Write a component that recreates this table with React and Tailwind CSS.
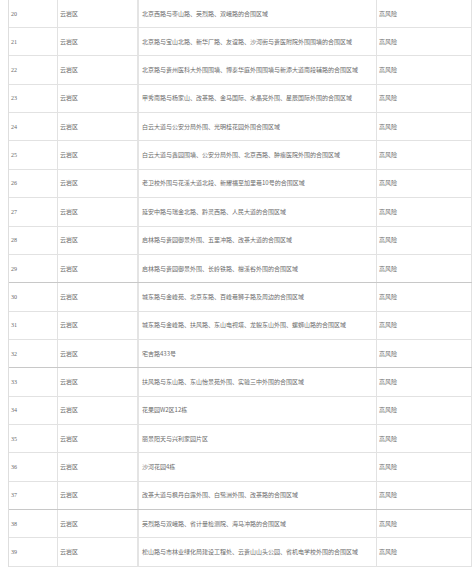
import React from "react";

const rows = [
  ["20", "北京西路与枣山路、英烈路、双峨路的合围区域"],
  ["21", "北京路与宝山北路、新华厂路、友谊路、沙河街与贵医附院外围围墙的合围区域"],
  ["22", "北京路与贵州医科大外围围墙、博泰华庭外围围墙与新添大道南段辅路的合围区域"],
  ["23", "甲秀南路与杨家山、改茶路、金马国际、水晶亮外围、星辰国际外围的合围区域"],
  ["24", "白云大道与公安分局外围、光明桂花园外围合围区域"],
  ["25", "白云大道与鑫园围墙、公安分局外围、北京西路、肿瘤医院外围的合围区域"],
  ["26", "老卫校外围与花溪大道北段、新耀福至加里巷10号的合围区域"],
  ["27", "延安中路与瑞金北路、黔灵西路、人民大道的合围区域"],
  ["28", "启林路与贵园御景外围、五里冲路、改茶大道的合围区域"],
  ["29", "启林路与贵园御景外围、长岭铁路、檀溪谷外围的合围区域"],
  ["30", "城东路与金峰苑、北京东路、百峰巷狮子路及周边的合围区域"],
  ["31", "城东路与金峰路、扶风路、东山电视塔、龙鲵东山外围、螺蛳山路的合围区域"],
  ["32", "宅吉路433号"],
  ["33", "扶风路与东山路、东山怡景苑外围、实验三中外围的合围区域"],
  ["34", "花果园W2区12栋"],
  ["35", "丽景阳天与兴利家园片区"],
  ["36", "沙河花园4栋"],
  ["37", "改茶大道与枫丹白露外围、白鹭洲外围、改茶路的合围区域"],
  ["38", "英烈路与双峨路、省计量检测院、海马冲路的合围区域"],
  ["39", "松山路与市林业绿化局建设工程处、云贵山山头公园、省机电学校外围的合围区域"],
];

const darker = new Set(["29", "32", "37"]);

export default function App() {
  return (
    <div
      className="w-[474px] h-[570px] overflow-hidden bg-white pl-[8px]"
      style={{ fontFamily: '"Noto Sans CJK SC", "Noto Sans", sans-serif' }}
    >
      <div className="w-[464px] border-l border-[#dedede] text-[6px] leading-none text-[#6a6a6a]">
        {rows.map(([n, addr], i) => (
          <div
            key={n}
            className={
              "grid grid-cols-[49px_81px_238px_95px] border-b " +
              (darker.has(n) ? "border-[#c8c8c8] " : "border-[#e2e2e2] ") +
              (i === 0 ? "h-[28px]" : "h-[28.37px]")
            }
          >
            <div className="flex items-center border-r border-[#e2e2e2] pl-[2px]" style={{ fontFamily: '"Liberation Serif", serif' }}>
              {n}
            </div>
            <div className="flex items-center border-r-2 border-[#e4e4e4] pl-[2px]">云岩区</div>
            <div className="flex items-center border-r border-[#e2e2e2] pl-[3px] whitespace-nowrap">{addr}</div>
            <div className="flex items-center border-r border-[#e2e2e2] pl-[2px]">高风险</div>
          </div>
        ))}
      </div>
    </div>
  );
}
